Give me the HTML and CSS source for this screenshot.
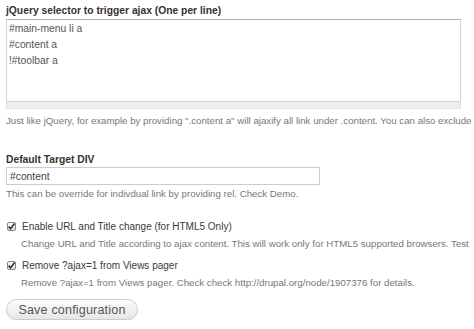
FILE: index.html
```html
<!DOCTYPE html>
<html lang="en">
<head>
    <meta charset="UTF-8">
    <meta name="viewport" content="width=device-width, initial-scale=1.0">
    <title>Ajaxify settings</title>

    <link rel="stylesheet" href="styles.css">
</head>
<body>
    <form class="settings-form">
        <div class="form-item form-item-selector">
            <label for="selectors" class="form-label">jQuery selector to trigger ajax (One per line)</label>
            <div class="resizable">
                <textarea id="selectors" class="form-textarea">#main-menu li a
#content a
!#toolbar a</textarea>
                <div class="grippie"></div>
            </div>
            <div class="description">Just like jQuery, for example by providing ".content a" will ajaxify all link under .content. You can also exclude</div>
        </div>

        <div class="form-item form-item-target">
            <label for="target" class="form-label">Default Target DIV</label>
            <input type="text" id="target" class="form-text" value="#content">
            <div class="description">This can be override for indivdual link by providing rel. Check Demo.</div>
        </div>

        <div class="form-item form-type-checkbox first-checkbox">
            <label class="option">
                <span class="check-box">
                    <svg width="9" height="9" viewBox="0 0 9 9"><path d="M1.6 4.6 L3.6 6.8 L7.6 1.6" fill="none" stroke="#333" stroke-width="1.6"/></svg>
                </span>
                Enable URL and Title change (for HTML5 Only)
            </label>
            <div class="description">Change URL and Title according to ajax content. This will work only for HTML5 supported browsers. Test</div>
        </div>

        <div class="form-item form-type-checkbox">
            <label class="option">
                <span class="check-box">
                    <svg width="9" height="9" viewBox="0 0 9 9"><path d="M1.6 4.6 L3.6 6.8 L7.6 1.6" fill="none" stroke="#333" stroke-width="1.6"/></svg>
                </span>
                Remove ?ajax=1 from Views pager
            </label>
            <div class="description">Remove ?ajax=1 from Views pager. Check check http://drupal.org/node/1907376 for details.</div>
        </div>

        <div class="form-actions">
            <button type="button" class="form-submit">Save configuration</button>
        </div>
    </form>
</body>
</html>
```

FILE: styles.css
```css
* {
    margin: 0;
    padding: 0;
    box-sizing: border-box;
    font-family: 'Liberation Sans', Arial, sans-serif;
}

body {
    background-color: #fff;
    color: #333;
    overflow: hidden;
}

.settings-form {
    padding: 4px 0 0 6px;
    width: 474px;
    white-space: nowrap;
}

.form-label {
    display: block;
    font-size: 10.3px;
    line-height: 13px;
    font-weight: bold;
    color: #333;
}

.resizable {
    width: 455px;
    margin-top: 2px;
}

.form-textarea {
    display: block;
    width: 455px;
    height: 83px;
    padding: 1px 2px;
    font-size: 10.3px;
    line-height: 16px;
    color: #555;
    border: 1px solid #d4d4d4;
    border-top-color: #b0b0b0;
    resize: none;
    overflow: hidden;
    outline: none;
}

.grippie {
    height: 7px;
    background: #eee;
    border: 1px solid #e4e4e4;
    border-top: none;
}

.description {
    font-size: 9.7px;
    line-height: 12px;
    color: #777;
    overflow: hidden;
}

.form-item-selector .description {
    margin-top: 6px;
}

.form-item-target {
    margin-top: 26px;
}

.form-text {
    display: block;
    width: 314px;
    height: 18px;
    margin-top: 1px;
    padding: 0 3px;
    font-size: 10.3px;
    color: #444;
    border: 1px solid #ccc;
    outline: none;
}

.form-item-target .description {
    margin-top: 3px;
}

.form-type-checkbox {
    margin-top: 9px;
}

.first-checkbox {
    margin-top: 20px;
}

.option {
    display: flex;
    align-items: center;
    gap: 6px;
    font-size: 10px;
    line-height: 13px;
    color: #3a3a3a;
    padding-left: 1px;
}

.check-box {
    display: flex;
    align-items: center;
    justify-content: center;
    width: 9px;
    height: 9px;
    border: 1px solid #888;
    border-radius: 2px;
    background: linear-gradient(#fff, #ddd);
}

.check-box svg {
    display: block;
    flex: none;
}

.form-type-checkbox .description {
    margin-top: 5px;
    padding-left: 15px;
}

.form-actions {
    margin-top: 10px;
}

.form-submit {
    width: 132px;
    height: 21px;
    font-size: 12.5px;
    letter-spacing: 0.2px;
    color: #555;
    border: 1px solid #ccc;
    border-radius: 11px;
    background: linear-gradient(#fdfdfd, #e6e6e6);
    box-shadow: 0 1px 1px rgba(0, 0, 0, 0.08);
    cursor: pointer;
}
```
